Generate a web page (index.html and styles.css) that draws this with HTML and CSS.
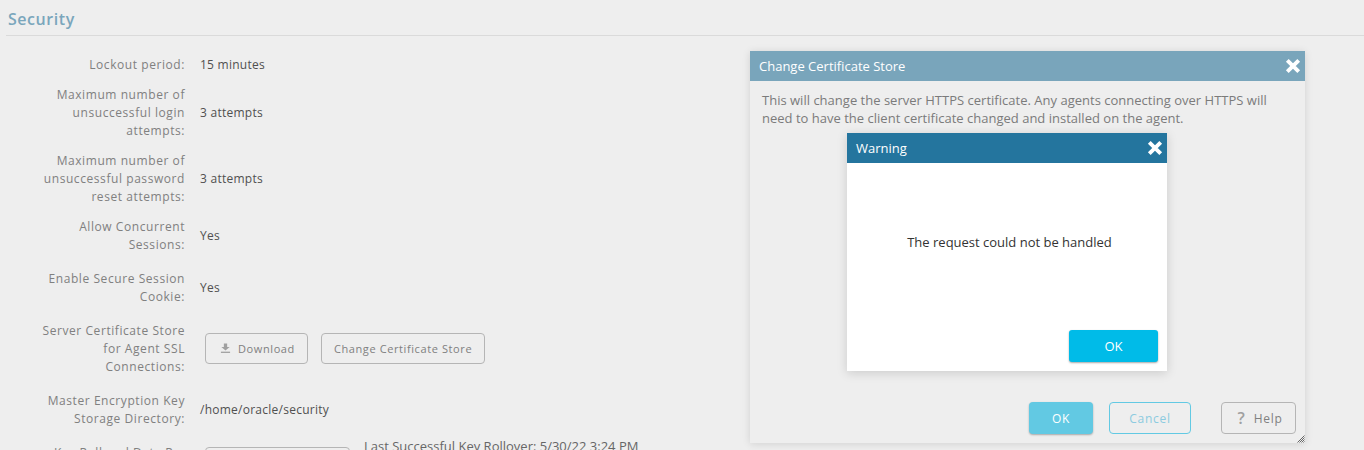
FILE: index.html
```html
<!DOCTYPE html>
<html lang="en">
<head>
<meta charset="utf-8">
<title>Security</title>
<link rel="stylesheet" href="styles.css">
</head>
<body>
<main class="page">
  <h1 class="section-title">Security</h1>
  <div class="form">
    <div class="row"><div class="label">Lockout period:</div><div class="value">15 minutes</div></div>
    <div class="row"><div class="label">Maximum number of unsuccessful login attempts:</div><div class="value">3 attempts</div></div>
    <div class="row"><div class="label">Maximum number of unsuccessful password reset attempts:</div><div class="value">3 attempts</div></div>
    <div class="row"><div class="label">Allow Concurrent Sessions:</div><div class="value">Yes</div></div>
    <div class="row row-spaced"><div class="label">Enable Secure Session Cookie:</div><div class="value">Yes</div></div>
    <div class="row row-spaced">
      <div class="label">Server Certificate Store for Agent SSL Connections:</div>
      <div class="actions actions-cert">
        <button class="btn" type="button">
          <svg class="dl-icon" viewBox="0 0 12 12" aria-hidden="true"><path d="M4.200 1h3.600v3.800h2.700L6 8.600 1.500 4.800h2.700z"/><rect x="1" y="10" width="10" height="1.400"/></svg>
          Download
        </button>
        <button class="btn" type="button">Change Certificate Store</button>
      </div>
    </div>
    <div class="row row-spaced"><div class="label">Master Encryption Key Storage Directory:</div><div class="value">/home/oracle/security</div></div>
    <div class="row row-last">
      <div class="label label-last">Key Roll and Data Re-encryption:</div>
      <div class="actions actions-last">
        <button class="btn btn-wide" type="button">Key Rollover</button>
        <div class="status">Last Successful Key Rollover: 5/30/22 3:24 PM</div>
      </div>
    </div>
  </div>
</main>

<section class="dialog">
  <header class="dialog-head dialog-head-muted">
    <span>Change Certificate Store</span>
    <svg class="close" viewBox="0 0 14 14" aria-hidden="true"><path d="M2 2l10 10M12 2L2 12"/></svg>
  </header>
  <p class="dialog-text">This will change the server HTTPS certificate. Any agents connecting over HTTPS will need to have the client certificate changed and installed on the agent.</p>
  <footer class="dialog-foot">
    <button class="dbtn dbtn-ok" type="button">OK</button>
    <button class="dbtn dbtn-cancel" type="button">Cancel</button>
    <button class="dbtn dbtn-help" type="button"><span class="q">?</span>Help</button>
  </footer>
  <svg class="grip" viewBox="0 0 8 8" aria-hidden="true"><path d="M7.500 0.500L0.500 7.500M7.500 2.500L2.500 7.500M7.500 4.500L4.500 7.500M7.500 6.500L6.500 7.500"/></svg>
</section>

<section class="alert">
  <header class="dialog-head dialog-head-strong">
    <span>Warning</span>
    <svg class="close" viewBox="0 0 14 14" aria-hidden="true"><path d="M2 2l10 10M12 2L2 12"/></svg>
  </header>
  <div class="alert-body">The request could not be handled</div>
  <footer class="alert-foot"><button class="alert-ok" type="button">OK</button></footer>
</section>
</body>
</html>
```

FILE: styles.css
```css
* { box-sizing: border-box; }
html, body { margin: 0; height: 450px; overflow: hidden; }
body {
  background: #eeeeee;
  font-family: "Open Sans", "Liberation Sans", sans-serif;
  font-size: 12px;
  line-height: 18px;
  color: #666;
}
button { font-family: inherit; cursor: pointer; }

.page { padding: 0 0 0 6px; }
.section-title {
  margin: 0;
  padding: 8px 0 0 2px;
  height: 36px;
  border-bottom: 1px solid #dadada;
  font-size: 16px;
  line-height: 22px;
  font-weight: 600;
  letter-spacing: 0.55px;
  color: #7aa6bc;
}
.form { padding-top: 20px; display: flex; flex-direction: column; gap: 12px; }
.row { display: flex; align-items: center; }
.row-spaced { margin-top: 4px; }
.label {
  width: 145px;
  margin-left: 34px;
  flex: none;
  text-align: right;
  color: #808080;
  letter-spacing: 0.57px;
}
.value {
  margin-left: 15px;
  color: #505050;
  letter-spacing: 0.25px;
}
.actions { display: flex; align-items: center; margin-left: 20px; gap: 13px; }
.actions-cert { padding-bottom: 2px; }
.row-last { margin-top: -3px; align-items: flex-start; }
.label-last { margin-top: 7px; }
.actions-last { align-items: flex-start; gap: 14px; }
.btn {
  height: 31px;
  padding: 0 12px;
  display: inline-flex;
  align-items: center;
  gap: 7px;
  background: transparent;
  border: 1px solid #b5b5b5;
  border-radius: 4px;
  color: #808080;
  font-size: 11px;
  letter-spacing: 0.6px;
}
.btn-wide { width: 145px; margin-top: 10px; justify-content: center; }
.dl-icon { width: 11px; height: 12px; margin-left: 2px; fill: #a0a0a0; }
.status { color: #666; font-size: 13px; }

.dialog {
  position: absolute;
  left: 750px;
  top: 51px;
  width: 555px;
  height: 392px;
  background: #eeeeee;
  box-shadow: 0 1px 8px rgba(0, 0, 0, 0.12);
}
.dialog-head {
  height: 30px;
  display: flex;
  align-items: center;
  justify-content: space-between;
  padding: 0 4px 0 9px;
  color: #fff;
  font-size: 13px;
}
.dialog-head-muted { background: #79a5bb; }
.dialog-head-strong { background: #24759e; }
.close { width: 16px; height: 16px; margin-top: -1px; fill: none; stroke: #fff; stroke-width: 3.4; }
.dialog-text {
  margin: 10px 0 0;
  padding: 0 12px;
  font-size: 13px;
  line-height: 18px;
  color: #7b7b7b;
  letter-spacing: 0.01px;
}
.dialog-foot {
  position: absolute;
  right: 9px;
  bottom: 9px;
  display: flex;
  align-items: stretch;
}
.dbtn {
  height: 32px;
  border-radius: 4px;
  font-size: 12px;
  letter-spacing: 0.7px;
  padding: 0;
}
.dbtn-ok {
  width: 64px;
  background: #62c9e3;
  border: 0;
  color: #fff;
  box-shadow: 0 1px 2px rgba(0, 0, 0, 0.3);
}
.dbtn-cancel {
  width: 82px;
  margin-left: 16px;
  background: transparent;
  border: 1px solid #62c9e3;
  color: #8ccbe0;
}
.dbtn-help {
  width: 75px;
  margin-left: 30px;
  padding-left: 3px;
  background: transparent;
  border: 1px solid #b5b5b5;
  color: #808080;
}
.q { font-size: 16px; font-weight: 600; color: #a0a0a0; margin-right: 9px; vertical-align: -1px; letter-spacing: 0; }
.grip { position: absolute; right: 0; bottom: 0; width: 8px; height: 8px; fill: none; stroke: #444; stroke-width: 0.8; }

.alert {
  position: absolute;
  left: 847px;
  top: 133px;
  width: 320px;
  height: 238px;
  background: #fff;
  box-shadow: 0 2px 10px rgba(0, 0, 0, 0.15);
  display: flex;
  flex-direction: column;
}
.alert-body {
  height: 158px;
  padding: 0 0 1px 5px;
  display: flex;
  align-items: center;
  justify-content: center;
  font-size: 13px;
  color: #333;
}
.alert-foot { display: flex; justify-content: flex-end; padding: 9px 9px 0 0; }
.alert-ok {
  width: 89px;
  height: 32px;
  background: #00bbe8;
  border: 0;
  border-radius: 3px;
  color: #fff;
  font-size: 13px;
  box-shadow: 0 1px 2px rgba(0, 0, 0, 0.35);
}
```
